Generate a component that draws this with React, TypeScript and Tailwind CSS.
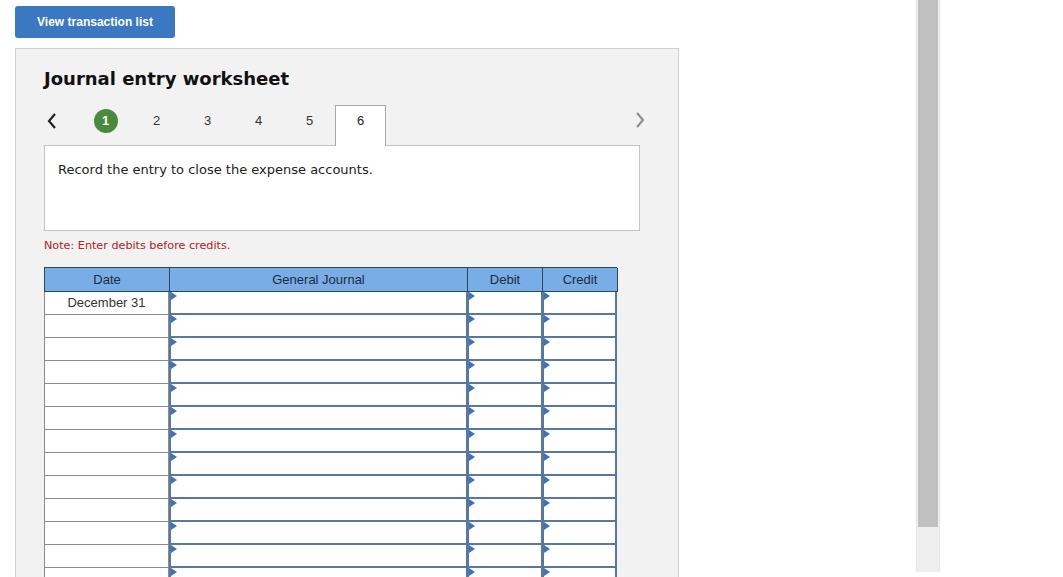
import React from "react";

const ROWS = 13;

function Chevron({ dir, color }: { dir: "left" | "right"; color: string }) {
  return (
    <svg width="12" height="18" viewBox="0 0 12 18" fill="none">
      {dir === "left" ? (
        <path d="M9 2 L3 9 L9 16" stroke={color} strokeWidth="2.2" />
      ) : (
        <path d="M3 2 L9 9 L3 16" stroke={color} strokeWidth="2" />
      )}
    </svg>
  );
}

function InputCell({ last }: { last?: boolean }) {
  return (
    <div
      className={`relative h-[23px] bg-white border-l-2 border-b-2 border-[#5877a3] ${last ? "border-r-2" : "border-r"}`}
    >
      <span className="absolute left-0 top-0 w-0 h-0 border-y-[4px] border-y-transparent border-l-[6px] border-l-[#3f73b9]" />
    </div>
  );
}

export default function App() {
  const tabs = [1, 2, 3, 4, 5, 6];

  return (
    <div className="h-[577px] overflow-hidden bg-white flex font-['Liberation_Sans',Arial,sans-serif]">
      <div className="w-[916px] shrink-0 pl-[15px] pt-[6px]">
        <button className="w-[160px] h-[32px] rounded-[3px] bg-[#3b78c2] text-white text-[12px] font-bold">
          View transaction list
        </button>

        <div className="mt-[10px] w-[664px] h-[600px] bg-[#f2f2f2] border border-[#cfcfcf] pl-[28px] pt-[18px]">
          <h1 className="font-['DejaVu_Sans',Verdana,sans-serif] font-bold text-[18px] text-[#111] leading-[24px]">
            Journal entry worksheet
          </h1>

          <div className="mt-[14px] flex items-start w-[606px] h-[41px]">
            <div className="w-[36px] pt-[7px] pl-[2px]">
              <Chevron dir="left" color="#222" />
            </div>
            {tabs.map((t) =>
              t === 6 ? (
                <div
                  key={t}
                  className="relative z-10 w-[51px] h-[41px] bg-white border border-b-0 border-[#a8a8a8] pt-[7px] text-center leading-[16px] text-[13px] text-[#222]"
                >
                  {t}
                </div>
              ) : t === 1 ? (
                <div key={t} className="w-[51px] pt-[4px] flex justify-center">
                  <span className="w-[24px] h-[24px] rounded-full bg-[#4a8a3f] text-white font-bold text-[13px] flex items-center justify-center">
                    1
                  </span>
                </div>
              ) : (
                <div key={t} className="w-[51px] pt-[8px] text-center leading-[16px] text-[13px] text-[#333]">
                  {t}
                </div>
              )
            )}
            <div className="flex-1 pt-[6px] flex justify-end pr-[4px]">
              <Chevron dir="right" color="#8a8a8a" />
            </div>
          </div>

          <div className="-mt-px w-[596px] h-[86px] bg-white border border-[#c4c4c4] pl-[13px] pt-[14px]">
            <p className="font-['DejaVu_Sans',Verdana,sans-serif] text-[13px] text-[#222]">
              Record the entry to close the expense accounts.
            </p>
          </div>

          <p className="mt-[7px] font-['DejaVu_Sans',Verdana,sans-serif] text-[11.2px] text-[#b22222]">
            Note: Enter debits before credits.
          </p>

          <div className="mt-[12px] w-[573px]">
            <div className="grid grid-cols-[125px_298px_75px_75px] border-t border-l border-[#2a4766] bg-[#78ade6] text-[13px] text-[#1c2b3d]">
              {["Date", "General Journal", "Debit", "Credit"].map((h) => (
                <div key={h} className="h-[24px] flex items-center justify-center border-r border-b border-[#2a4766]">
                  {h}
                </div>
              ))}
            </div>
            {Array.from({ length: ROWS }).map((_, i) => (
              <div key={i} className="grid grid-cols-[125px_298px_75px_75px]">
                <div className="h-[23px] bg-white border-l border-r border-b border-[#8c8c8c] flex items-center justify-center text-[13px] text-[#333]">
                  {i === 0 ? "December 31" : ""}
                </div>
                <InputCell />
                <InputCell />
                <InputCell last />
              </div>
            ))}
          </div>
        </div>
      </div>

      <div className="w-[24px] shrink-0 h-[572px] bg-[#efefef] border-x border-[#e6e6e6] flex flex-col">
        <div className="h-[527px] mx-px bg-[#c1c1c1]" />
      </div>
      <div className="flex-1" />
    </div>
  );
}
